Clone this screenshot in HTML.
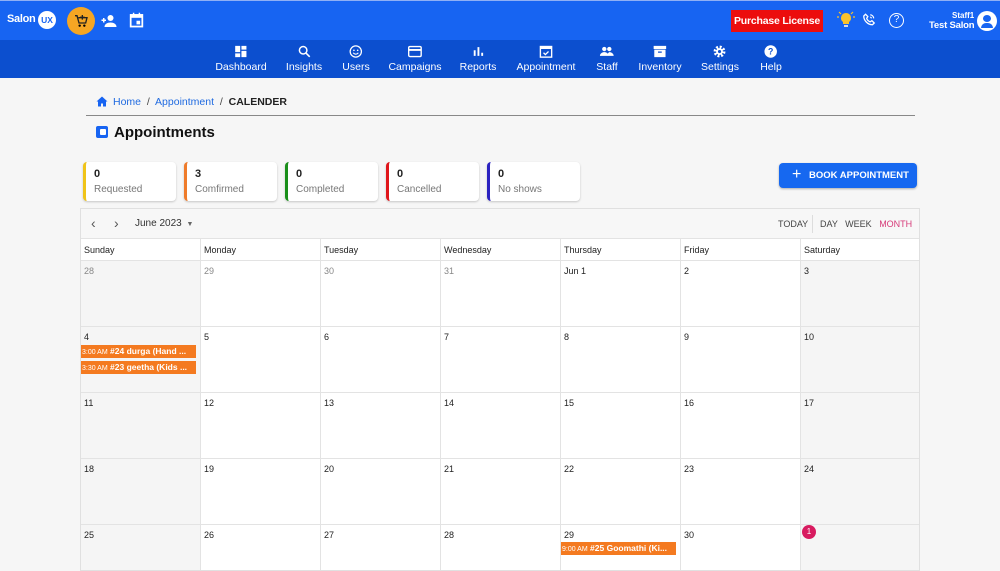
<!DOCTYPE html>
<html><head><style>
*{box-sizing:border-box;margin:0;padding:0}
html,body{width:1000px;height:571px;overflow:hidden}
body{background:#f6f6f6;font-family:"Liberation Sans",sans-serif;position:relative}
.top{position:absolute;left:0;top:0;width:1000px;height:40px;background:#1764f2;border-top:1px solid #8fb0f5}
.nav{position:absolute;left:0;top:40px;width:1000px;height:38px;background:#0c4fcf}
.ni{position:absolute;top:4px;color:#fff;font-size:10.5px;text-align:center;transform:translateX(-50%);white-space:nowrap}
.ni svg{display:block;margin:0 auto 2px;width:15px;height:15px}
.abs{position:absolute;white-space:nowrap}
.card{position:absolute;top:162px;width:93px;height:39px;background:#fff;border-radius:4px;box-shadow:0 1px 2px rgba(0,0,0,.2);border-left:3px solid}
.card b{position:absolute;left:8px;top:6px;font-size:11px;color:#222}
.card span{position:absolute;left:8px;top:22px;font-size:10px;color:#777}
.cal{position:absolute;left:80px;top:208px;width:840px;height:363px;background:#fff;border:1px solid #e0e0e0;overflow:hidden}
.cell{position:absolute;border-right:1px solid #e3e3e3;border-bottom:1px solid #e3e3e3;font-size:9px;color:#222;padding:5px 0 0 3px}
.gray{background:#f5f5f5}
.ev{position:absolute;height:13px;background:#f47a20;color:#fff;font-size:8.5px;font-weight:bold;line-height:13px;padding-left:1px;white-space:nowrap;overflow:hidden;width:115px;left:1px}
.ev i{font-style:normal;font-weight:normal;font-size:7px}
</style></head><body>
<div class="top">
 <div class="abs" style="left:7px;top:12px;color:#fff;font-weight:bold;font-size:11px;letter-spacing:-0.3px">Salon</div>
 <div class="abs" style="left:38px;top:10px;width:18px;height:18px;border-radius:50%;background:#fff;color:#1764f2;font-size:8.5px;font-weight:bold;text-align:center;line-height:18px">UX</div>
 <div class="abs" style="left:67px;top:6px;width:28px;height:28px;border-radius:50%;background:#f6a623"></div>
 <svg class="abs" style="left:73px;top:12px" width="16" height="16" viewBox="0 0 24 24"><path d="M3 4h3l3 11h10l2-8H8" fill="none" stroke="#222" stroke-width="2"/><circle cx="10" cy="19" r="1.8"/><circle cx="17" cy="19" r="1.8"/><path d="M14 3v7M10.5 6.5h7" stroke="#222" stroke-width="2"/></svg>
 <svg class="abs" style="left:100px;top:12px" width="18" height="16" viewBox="0 0 24 20"><circle cx="14" cy="6" r="4" fill="#fff"/><path d="M6 18c0-4 4-6 8-6s8 2 8 6z" fill="#fff"/><path d="M2 9h6M5 6v6" stroke="#fff" stroke-width="2"/></svg>
 <svg class="abs" style="left:129px;top:11px" width="15" height="16" viewBox="0 0 20 22"><rect x="2" y="4" width="16" height="16" fill="none" stroke="#fff" stroke-width="2.4"/><rect x="2" y="4" width="16" height="4" fill="#fff"/><path d="M6 1v4M14 1v4" stroke="#fff" stroke-width="2"/><rect x="10" y="12" width="5" height="5" fill="#fff"/></svg>
 <div class="abs" style="left:731px;top:9px;width:92px;height:22px;background:#ec0d0d;color:#fff;font-size:10.5px;font-weight:bold;text-align:center;line-height:22px;letter-spacing:-0.2px">Purchase License</div>
 <svg class="abs" style="left:836px;top:9px" width="20" height="18" viewBox="0 0 20 18"><path d="M10 3a5 5 0 0 0-3 9v2h6v-2a5 5 0 0 0-3-9z" fill="#f9c22b"/><rect x="8" y="15" width="4" height="2" fill="#ddd"/><path d="M1 7h2M17 7h2M3 2l2 2M17 2l-2 2" stroke="#f9c22b" stroke-width="1.2"/></svg>
 <svg class="abs" style="left:862px;top:11px" width="14" height="15" viewBox="0 0 24 24"><path d="M6 3l4 4-2 3c1 3 3 5 6 6l3-2 4 4-3 3C10 21 3 14 3 6z" fill="none" stroke="#fff" stroke-width="2.2"/><path d="M14 4a6 6 0 0 1 6 6M14 8a2 2 0 0 1 2 2" stroke="#fff" stroke-width="2" fill="none"/></svg>
 <div class="abs" style="left:889px;top:12px;width:15px;height:15px;border:1.6px solid #fff;border-radius:50%;color:#fff;font-size:10px;text-align:center;line-height:12px">?</div>
 <div class="abs" style="left:952px;top:10px;color:#fff;font-size:8px;font-weight:bold">Staff1</div>
 <div class="abs" style="left:929px;top:19px;color:#fff;font-size:9.5px;font-weight:bold;letter-spacing:-0.2px">Test Salon</div>
 <div class="abs" style="left:977px;top:10px;width:20px;height:20px;border-radius:50%;background:#fff"><div class="abs" style="left:6px;top:4px;width:8px;height:7px;border-radius:50%;background:#1764f2"></div><div class="abs" style="left:4px;top:12px;width:12px;height:5px;border-radius:6px 6px 0 0;background:#1764f2"></div></div>
</div>
<div class="nav">
 <div class="ni" style="left:241px"><svg viewBox="0 0 24 24" fill="#fff"><path d="M3 3h8v10H3zM13 3h8v6h-8zM13 11h8v10h-8zM3 15h8v6H3z"/></svg>Dashboard</div>
 <div class="ni" style="left:304px"><svg viewBox="0 0 24 24"><circle cx="10" cy="10" r="6" fill="none" stroke="#fff" stroke-width="2.4"/><path d="M14.5 14.5l6 6" stroke="#fff" stroke-width="2.6"/></svg>Insights</div>
 <div class="ni" style="left:356px"><svg viewBox="0 0 24 24"><circle cx="12" cy="12" r="9" fill="none" stroke="#fff" stroke-width="2"/><circle cx="9" cy="10" r="1.3" fill="#fff"/><circle cx="15" cy="10" r="1.3" fill="#fff"/><path d="M8 14c2 3 6 3 8 0" stroke="#fff" stroke-width="1.8" fill="none"/></svg>Users</div>
 <div class="ni" style="left:415px"><svg viewBox="0 0 24 24"><rect x="2" y="4" width="20" height="16" rx="2" fill="none" stroke="#fff" stroke-width="2.2"/><rect x="2" y="8" width="20" height="3" fill="#fff"/></svg>Campaigns</div>
 <div class="ni" style="left:478px"><svg viewBox="0 0 24 24" fill="#fff"><rect x="5" y="10" width="3" height="9"/><rect x="11" y="5" width="3" height="14"/><rect x="17" y="14" width="3" height="5"/></svg>Reports</div>
 <div class="ni" style="left:546px"><svg viewBox="0 0 24 24"><rect x="3" y="4" width="18" height="17" fill="none" stroke="#fff" stroke-width="2.2"/><rect x="3" y="4" width="18" height="4" fill="#fff"/><path d="M8 14l3 3 5-5" stroke="#fff" stroke-width="2" fill="none"/></svg>Appointment</div>
 <div class="ni" style="left:607px"><svg viewBox="0 0 24 24" fill="#fff"><circle cx="8" cy="8" r="3.5"/><circle cx="16" cy="8" r="3.5"/><path d="M1 19c0-4 4-6 7-6s7 2 7 6zM13 19c0-3 1-5 3-6 3 0 7 2 7 6z"/></svg>Staff</div>
 <div class="ni" style="left:660px"><svg viewBox="0 0 24 24" fill="#fff"><rect x="2" y="3" width="20" height="5"/><path d="M3 9h18v12H3z"/><rect x="9" y="12" width="6" height="2" fill="#0c4fcf"/></svg>Inventory</div>
 <div class="ni" style="left:720px"><svg viewBox="0 0 24 24"><circle cx="12" cy="12" r="7" fill="none" stroke="#fff" stroke-width="5" stroke-dasharray="3 2.5"/><circle cx="12" cy="12" r="5.5" fill="#fff"/><circle cx="12" cy="12" r="2.5" fill="#0c4fcf"/></svg>Settings</div>
 <div class="ni" style="left:771px"><svg viewBox="0 0 24 24"><circle cx="12" cy="12" r="10" fill="#fff"/><text x="12" y="17" font-size="14" font-weight="bold" text-anchor="middle" fill="#0c4fcf" font-family="Liberation Sans">?</text></svg>Help</div>
</div>
<svg class="abs" style="left:96px;top:96px" width="12" height="11" viewBox="0 0 24 22"><path d="M12 1L1 11h3v10h6v-6h4v6h6V11h3z" fill="#1764f2"/></svg>
<div class="abs" style="left:113px;top:96px;font-size:10.5px;color:#1f6ae0">Home <span style="color:#444">&nbsp;/&nbsp;</span> Appointment <span style="color:#444">&nbsp;/&nbsp;</span> <b style="color:#222">CALENDER</b></div>
<div class="abs" style="left:86px;top:115px;width:829px;height:1px;background:#888"></div>
<div class="abs" style="left:96px;top:126px;width:12px;height:12px;background:#1764f2;border-radius:2px"><div class="abs" style="left:4px;top:3px;width:6px;height:6px;background:#fff;border-radius:1px"></div></div>
<div class="abs" style="left:114px;top:124px;font-size:15px;font-weight:bold;color:#111">Appointments</div>
<div class="card" style="left:83px;border-color:#f0c419"><b>0</b><span>Requested</span></div>
<div class="card" style="left:184px;border-color:#ef7b2a"><b>3</b><span>Comfirmed</span></div>
<div class="card" style="left:285px;border-color:#1a8f1a"><b>0</b><span>Completed</span></div>
<div class="card" style="left:386px;border-color:#e0161b"><b>0</b><span>Cancelled</span></div>
<div class="card" style="left:487px;border-color:#2b22c0"><b>0</b><span>No shows</span></div>
<div class="abs" style="left:779px;top:163px;width:138px;height:25px;background:#1668f0;border-radius:4px;color:#fff;font-size:9.5px;font-weight:bold;line-height:25px;padding-left:30px;box-shadow:0 1px 2px rgba(0,0,0,.3)">BOOK APPOINTMENT</div>
<div class="abs" style="left:792px;top:168px;color:#fff;font-size:16px;line-height:14px">+</div>
<div class="cal">
 <div class="abs" style="left:0;top:0;width:838px;height:30px;background:#f7f7f7;border-bottom:1px solid #e3e3e3"></div>
 <div class="abs" style="left:10px;top:6px;font-size:14px;color:#555">&#8249;</div>
 <div class="abs" style="left:33px;top:6px;font-size:14px;color:#555">&#8250;</div>
 <div class="abs" style="left:54px;top:9px;font-size:10px;color:#333">June 2023 <span style="font-size:7px;color:#666">&nbsp;▼</span></div>
 <div class="abs" style="left:697px;top:10px;font-size:9px;color:#444">TODAY</div>
 <div class="abs" style="left:731px;top:6px;width:1px;height:18px;background:#ddd"></div>
 <div class="abs" style="left:739px;top:10px;font-size:9px;color:#444">DAY &nbsp;&nbsp;WEEK &nbsp;&nbsp;<span style="color:#d63a78">MONTH</span></div>
 <div id="g"></div>
</div>
<script>
var g=document.getElementById('g'),h='';
var names=['Sunday','Monday','Tuesday','Wednesday','Thursday','Friday','Saturday'];
for(var c=0;c<7;c++){h+='<div class="cell" style="left:'+(c*120)+'px;top:30px;width:'+(c==6?119:120)+'px;height:22px;padding-top:6px">'+names[c]+'</div>';}
var days=[[28,29,30,31,'Jun 1',2,3],[4,5,6,7,8,9,10],[11,12,13,14,15,16,17],[18,19,20,21,22,23,24],[25,26,27,28,29,30,'']];
for(var r=0;r<5;r++)for(var c=0;c<7;c++){var gr=(c==0||c==6);var col=(r==0&&c<4)?'#888':'#222';
h+='<div class="cell'+(gr?' gray':'')+'" style="left:'+(c*120)+'px;top:'+(52+r*66)+'px;width:'+(c==6?119:120)+'px;height:66px;color:'+col+'">'+days[r][c]+'</div>';}
g.innerHTML=h;
</script>
<div class="ev" style="left:81px;top:345px"><i>3:00 AM</i> #24 durga (Hand ...</div>
<div class="ev" style="left:81px;top:361px"><i>3:30 AM</i> #23 geetha (Kids ...</div>
<div class="ev" style="left:561px;top:542px"><i>9:00 AM</i> #25 Goomathi (Ki...</div>
<div class="abs" style="left:802px;top:525px;width:14px;height:14px;border-radius:50%;background:#d81b60;color:#fff;font-size:8px;text-align:center;line-height:14px">1</div>
</body></html>
